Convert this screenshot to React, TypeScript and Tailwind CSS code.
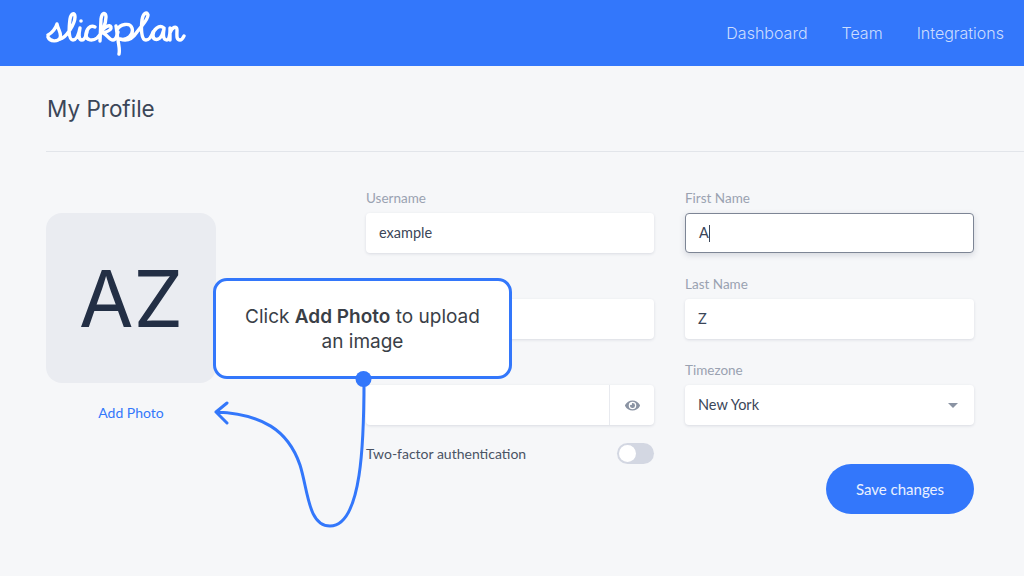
import { FaEye } from "react-icons/fa";

const inputClass =
  "flex h-10 w-full items-center rounded-[4px] bg-white px-[13px] text-[14.5px] text-[#3b4658] shadow-[0_1px_3px_rgba(50,60,90,0.14)]";

function Field({ label, children }: { label?: string; children: React.ReactNode }) {
  return (
    <div className="flex h-[63px] flex-col justify-between">
      {/* labels of the two fields behind the callout can't be seen, so they stay empty */}
      <label className="h-[17px] text-[13.5px] leading-[17px] text-[#9aa2b1]">{label}</label>
      {children}
    </div>
  );
}

function Logo() {
  return (
    <svg
      viewBox="46 10 140 46"
      className="h-[46px] w-[140px]"
      fill="none"
      stroke="#fff"
      strokeWidth="3.4"
      strokeLinecap="round"
      strokeLinejoin="round"
      aria-label="slickplan"
    >
      <path d="M48 35C52 33 56 28 57 24C58 30 62 33 60 38C58 42 50 42 48 37" />
      <path d="M60 39C66 38 75 24 75 17C75 12 71 13 70 19C69 27 68 40 73 40C77 40 79 33 80 28C79 33 78 40 82 40C84 40 86 36 87 32" />
      <path d="M95 27C90 24 86 30 86 35C86 41 93 41 97 38C102 34 106 23 106 17C106 12 102 12 101 19L100 41M101 32C104 27 110 24 111 27C112 31 105 32 103 33C107 34 109 40 113 40C116 40 117 36 118 32" />
      <path d="M116 26L118 40C119 47 120 50 119 54M117 30C120 24 130 22 132 28C134 35 127 41 120 39C127 42 133 38 137 32C142 25 148 20 148 15C147 11 143 13 142 20C141 28 141 40 146 40C150 40 152 35 153 32" />
      <path d="M164 28C159 24 153 30 153 35C153 41 159 41 162 35L164 29C163 35 163 40 167 40C169 40 170 34 170 31M170 28L170 40M170 33C172 27 177 25 177 30C177 35 176 40 180 40C182 40 183 38 184 36" />
      <circle cx="81" cy="21" r="1.8" fill="#fff" stroke="none" />
    </svg>
  );
}

export default function App() {
  return (
    <div className="relative h-[576px] w-[1024px] overflow-hidden bg-[#f6f7f9] font-['Lato',sans-serif]">
      <header className="flex h-[66px] items-center justify-between bg-[#3377fb] pl-[46px] pr-5">
        <Logo />
        <nav className="flex gap-[34px] font-['Inter',sans-serif] text-[16px] font-light text-white/75">
          <a>Dashboard</a>
          <a>Team</a>
          <a>Integrations</a>
        </nav>
      </header>

      <main className="pl-[46px]">
        <h1 className="flex h-[86px] items-center border-b border-[#e2e5ea] pl-[1px] font-['Inter',sans-serif] text-[22.5px] text-[#3b4658]">
          My Profile
        </h1>

        <div className="flex pt-[38px]">
          <div className="flex w-[170px] flex-col items-center pt-[23px]">
            <div className="flex h-[170px] w-[170px] items-center justify-center rounded-[16px] bg-[#eaecf1] font-['Inter',sans-serif] text-[79px] text-[#232f45]">
              AZ
            </div>
            <a className="mt-[19px] text-[14px] text-[#3377fb]">Add Photo</a>
          </div>

          <div className="ml-[150px] flex w-[288px] flex-col gap-[23px]">
            <Field label="Username">
              <div className={inputClass}>example</div>
            </Field>
            <Field>
              <div className={inputClass} />
            </Field>
            <Field>
              <div className={`${inputClass} justify-end !pr-0`}>
                <div className="flex h-full w-[45px] items-center justify-center border-l border-[#e8eaef] text-[#8a93a3]">
                  <FaEye size={15} />
                </div>
              </div>
            </Field>
            <div className="-mt-[5px] flex items-center justify-between">
              <span className="text-[14px] text-[#4a5364]">Two-factor authentication</span>
              <span className="flex h-[21px] w-[37px] items-center rounded-full bg-[#d3d7e2] px-[2px]">
                <span className="h-[17px] w-[17px] rounded-full bg-white" />
              </span>
            </div>
          </div>

          <div className="ml-[31px] flex w-[289px] flex-col gap-[23px]">
            <Field label="First Name">
              <div className={`${inputClass} border border-[#7d8595] shadow-[0_2px_6px_rgba(50,60,90,0.18)]`}>
                A<span className="h-[17px] w-px bg-[#3b4658]" />
              </div>
            </Field>
            <Field label="Last Name">
              <div className={inputClass}>Z</div>
            </Field>
            <Field label="Timezone">
              <div className={`${inputClass} justify-between`}>
                New York
                <span className="mr-[3px] h-0 w-0 border-x-[5px] border-t-[5px] border-x-transparent border-t-[#8a93a3]" />
              </div>
            </Field>
            <button className="mt-[16px] h-[50px] w-[148px] self-end rounded-full bg-[#3377fb] text-[15px] text-white/90">
              Save changes
            </button>
          </div>
        </div>
      </main>

      {/* Tutorial callout */}
      <div className="absolute left-[213px] top-[278px] flex h-[101px] w-[299px] items-center justify-center rounded-[14px] border-[3px] border-[#3377fb] bg-white text-center font-['Inter',sans-serif] text-[19px] leading-[25px] text-[#3a3f47]">
        <p>
          <span>Click </span>
          <b className="font-semibold">Add Photo</b>
          <span> to upload</span>
          <br />
          <span>an image</span>
        </p>
      </div>
      <svg className="absolute left-0 top-0 h-[576px] w-[1024px]" viewBox="0 0 1024 576" fill="none">
        <path
          d="M364 380C364 440 362 526 330 526C308 526 308 490 300 465C288 430 262 414 216 412M227 403L216 412L227 423"
          stroke="#3377fb"
          strokeWidth="3"
          strokeLinecap="round"
          strokeLinejoin="round"
        />
        <circle cx="363.5" cy="379" r="8" fill="#3377fb" />
      </svg>
    </div>
  );
}
